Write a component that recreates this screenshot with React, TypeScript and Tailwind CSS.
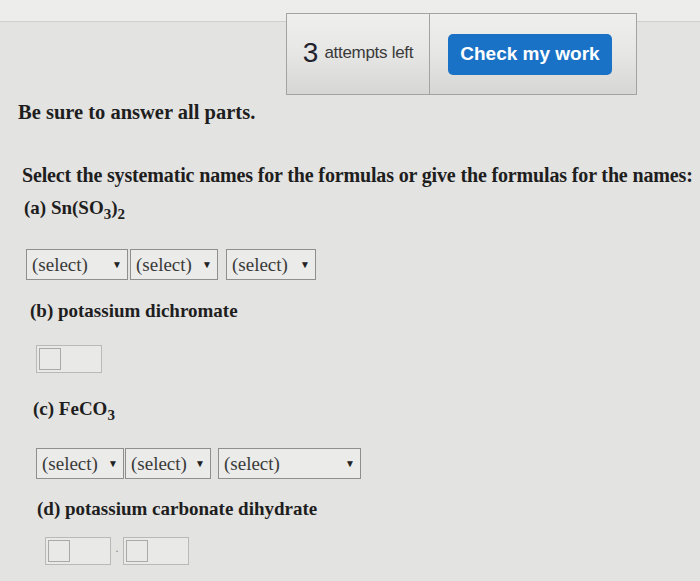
import React from "react";

const serif = { fontFamily: '"Liberation Serif", "Times New Roman", serif' };
const sans = { fontFamily: '"Liberation Sans", Arial, sans-serif' };

function Select({ w }: { w: string }) {
  return (
    <div
      className={`flex h-[31px] items-center justify-between border border-[#8f8f8f] bg-[#ebebea] px-[5px] text-[19px] text-[#3a3a3a] ${w}`}
      style={serif}
    >
      <span>(select)</span>
      <span className="text-[10px] text-[#222]">▼</span>
    </div>
  );
}

function AnswerBox() {
  return (
    <div className="flex h-[28px] w-[66px] items-center border border-[#b9b9b9] bg-[#e9e9e8] pl-[2px]">
      <div className="h-[22px] w-[22px] border border-[#a9a9a9]" />
    </div>
  );
}

function Sub({ children }: { children: React.ReactNode }) {
  return <sub className="relative top-[5px] text-[15px] leading-none">{children}</sub>;
}

export default function App() {
  return (
    <div className="h-[581px] w-[700px] overflow-hidden bg-[#e3e3e1] text-[#1e1e1e]" style={serif}>
      <div className="relative h-[96px]">
        <div className="h-[22px] border-b border-[#cfcfcf] bg-[#ededec]" />
        <div
          className="absolute left-[286px] top-[13px] flex h-[82px] w-[351px] border border-[#a3a3a3] bg-gradient-to-b from-[#efefee] via-[#e6e6e5] to-[#d6d6d5]"
          style={sans}
        >
          <div className="flex w-[143px] items-center justify-center gap-[6px] border-r border-[#a3a3a3] pb-[2px]">
            <span className="text-[28px] leading-none text-[#22222e]">3</span>
            <span className="text-[17px] tracking-[-0.3px] text-[#3a3a3a]">attempts left</span>
          </div>
          <div className="flex flex-1 items-center pl-[18px]">
            <div className="flex h-[41px] w-[164px] items-center justify-center rounded-[5px] bg-[#1a72c6] text-[19px] font-bold text-white">
              Check my work
            </div>
          </div>
        </div>
      </div>

      <div className="pl-[18px] pt-[1px]">
        <p className="text-[20.5px] font-bold">Be sure to answer all parts.</p>
        <p className="mt-[32px] pl-[4px] text-[20px] font-bold tracking-[-0.15px]">
          Select the systematic names for the formulas or give the formulas for the names:
        </p>

        <p className="mt-[4px] pl-[6px] text-[19px] font-bold">
          (a) Sn(SO<Sub>3</Sub>)<Sub>2</Sub>
        </p>
        <div className="mt-[27px] flex items-center gap-[2px] pl-[8px]">
          <Select w="w-[102px]" />
          <Select w="w-[88px]" />
          <div className="w-[4px]" />
          <Select w="w-[90px]" />
        </div>

        <p className="mt-[17px] pl-[12px] text-[19px] font-bold">(b) potassium dichromate</p>
        <div className="mt-[19px] pl-[18px]">
          <AnswerBox />
        </div>

        <p className="mt-[22px] pl-[15px] text-[19px] font-bold">
          (c) FeCO<Sub>3</Sub>
        </p>
        <div className="mt-[25px] flex items-center gap-[1px] pl-[18px]">
          <Select w="w-[88px]" />
          <Select w="w-[86px]" />
          <div className="w-[5px]" />
          <Select w="w-[143px]" />
        </div>

        <p className="mt-[16px] pl-[19px] text-[19px] font-bold">(d) potassium carbonate dihydrate</p>
        <div className="mt-[13px] flex items-center gap-[4px] pl-[27px]">
          <AnswerBox />
          <span className="text-[12px] text-[#888]">·</span>
          <AnswerBox />
        </div>
      </div>
    </div>
  );
}
